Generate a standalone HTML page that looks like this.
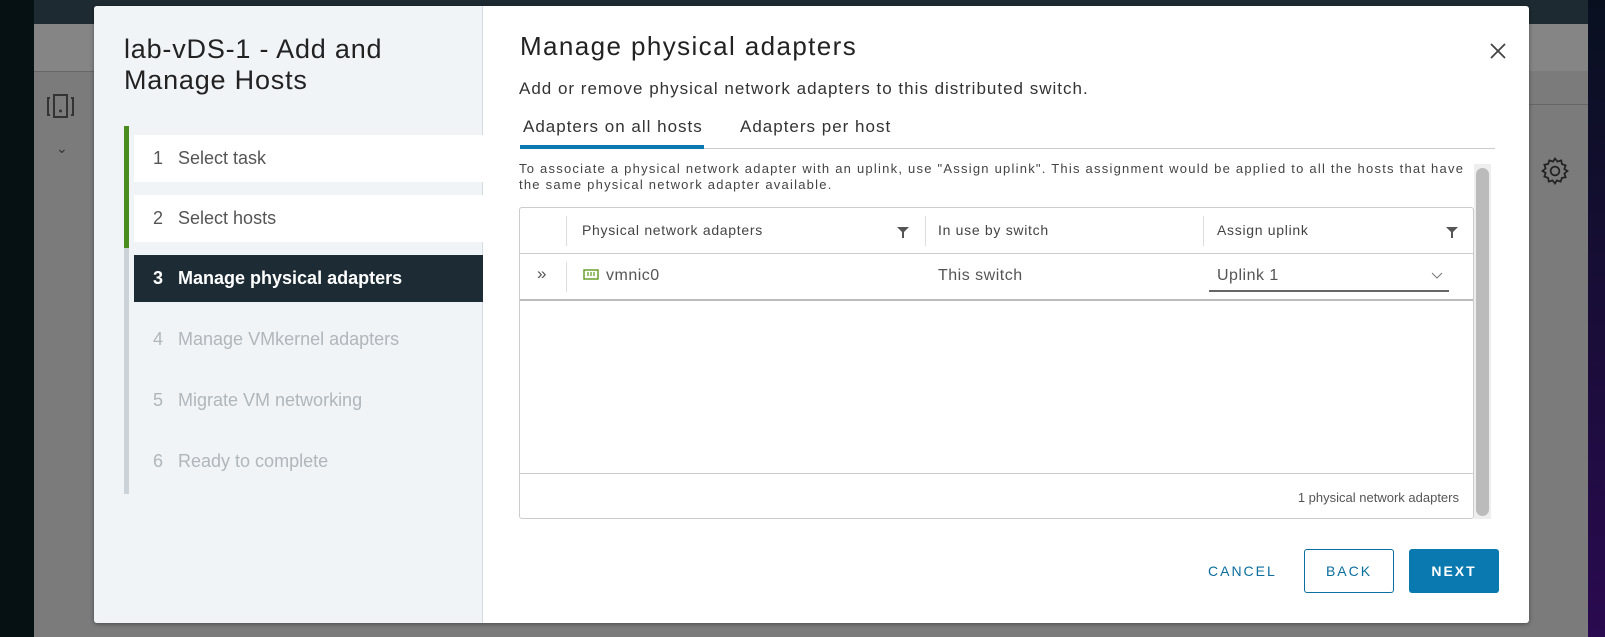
<!DOCTYPE html>
<html><head><style>
*{margin:0;padding:0;box-sizing:border-box}
body{width:1605px;height:637px;overflow:hidden;position:relative;background:#7b7b7b;font-family:"Liberation Sans",sans-serif}
.a{position:absolute}
.t{position:absolute;white-space:nowrap}
</style></head><body>
<div class="a" style="left:0;top:0;width:34px;height:637px;background:#061113"></div>
<div class="a" style="left:34px;top:0;width:1554px;height:24px;background:#1e2a31"></div>
<div class="a" style="left:34px;top:24px;width:1554px;height:47px;background:#858585"></div>
<div class="a" style="left:34px;top:71px;width:60px;height:1px;background:#666"></div>
<div class="a" style="left:1529px;top:104px;width:59px;height:1px;background:#666"></div>
<div class="a" style="left:1588px;top:0;width:17px;height:637px;background:linear-gradient(#081020,#2a0a50)"></div>
<svg class="a" style="left:46px;top:93px" width="30" height="26"><rect x="8" y="2" width="13" height="22" fill="none" stroke="#333" stroke-width="2"/><path d="M4 5H2v17h2M25 5h2v17h-2" fill="none" stroke="#333" stroke-width="2"/><circle cx="14.5" cy="18" r="1.5" fill="#333"/></svg>
<div class="t" style="left:56px;top:140px;color:#333;font-size:14px">⌄</div>
<svg class="a" style="left:1540px;top:156px" width="30" height="30" viewBox="0 0 24 24"><path d="M12 2l2 2.5 3-1 .5 3 3 1-1 3L22 12l-2.5 2 1 3-3 .5-1 3-3-1L12 22l-2-2.5-3 1-.5-3-3-1 1-3L2 12l2.5-2-1-3 3-.5 1-3 3 1z" fill="none" stroke="#222" stroke-width="1.4"/><circle cx="12" cy="12" r="3.5" fill="none" stroke="#222" stroke-width="1.4"/></svg>

<div class="a" style="left:94px;top:6px;width:1435px;height:617px;background:#fff;border-radius:3px;box-shadow:0 1px 4px rgba(0,0,0,.4);overflow:hidden">
 <div class="a" style="left:0;top:0;width:389px;height:617px;background:#f0f4f7;border-right:1px solid #d6dde2"></div>
 <div class="t" style="left:30px;top:28px;font-size:27px;line-height:31px;color:#222;letter-spacing:0.8px">lab-vDS-1 - Add and<br>Manage Hosts</div>
 <div class="a" style="left:30px;top:120px;width:5px;height:368px;background:#ccd3d8"></div>
 <div class="a" style="left:30px;top:120px;width:5px;height:122px;background:#4b8c1f"></div>
 <div class="a" style="left:40px;top:129px;width:349px;height:47px;background:#fff"></div>
 <div class="a" style="left:40px;top:189px;width:349px;height:47px;background:#fff"></div>
 <div class="a" style="left:40px;top:249px;width:349px;height:47px;background:#1c2b34"></div>
 <div class="t" style="left:59px;top:142px;font-size:18px;color:#555">1&nbsp;&nbsp;&nbsp;Select task</div>
 <div class="t" style="left:59px;top:202px;font-size:18px;color:#555">2&nbsp;&nbsp;&nbsp;Select hosts</div>
 <div class="t" style="left:59px;top:262px;font-size:18px;color:#fff;font-weight:bold">3&nbsp;&nbsp;&nbsp;Manage physical adapters</div>
 <div class="t" style="left:59px;top:323px;font-size:18px;color:#b0b6ba">4&nbsp;&nbsp;&nbsp;Manage VMkernel adapters</div>
 <div class="t" style="left:59px;top:384px;font-size:18px;color:#b0b6ba">5&nbsp;&nbsp;&nbsp;Migrate VM networking</div>
 <div class="t" style="left:59px;top:445px;font-size:18px;color:#b0b6ba">6&nbsp;&nbsp;&nbsp;Ready to complete</div>

 <div class="t" style="left:426px;top:25px;font-size:26px;color:#222;letter-spacing:1.4px">Manage physical adapters</div>
 <svg class="a" style="left:1395px;top:36px" width="18" height="18"><path d="M2 2L16 16M16 2L2 16" stroke="#444" stroke-width="1.8"/></svg>
 <div class="t" style="left:425px;top:73px;font-size:17px;color:#333;letter-spacing:1px">Add or remove physical network adapters to this distributed switch.</div>
 <div class="t" style="left:429px;top:111px;font-size:17px;color:#333;letter-spacing:1px">Adapters on all hosts</div>
 <div class="t" style="left:646px;top:111px;font-size:17px;color:#333;letter-spacing:1px">Adapters per host</div>
 <div class="a" style="left:426px;top:142px;width:975px;height:1px;background:#ccc"></div>
 <div class="a" style="left:426px;top:139px;width:184px;height:4px;background:#0a79b0"></div>
 <div class="t" style="left:425px;top:155px;font-size:13px;line-height:16px;color:#444;letter-spacing:1.23px">To associate a physical network adapter with an uplink, use "Assign uplink". This assignment would be applied to all the hosts that have<br>the same physical network adapter available.</div>
 <div class="a" style="left:1380px;top:158px;width:17px;height:355px;background:#eee"></div>
 <div class="a" style="left:1382px;top:162px;width:13px;height:348px;background:#bbb;border-radius:7px"></div>

 <div class="a" style="left:425px;top:201px;width:955px;height:312px;border:1px solid #ccc;border-radius:3px">
  <div class="a" style="left:0;top:45px;width:953px;height:1px;background:#ccc"></div>
  <div class="a" style="left:0;top:91px;width:953px;height:2px;background:#bbb"></div>
  <div class="a" style="left:0;top:265px;width:953px;height:1px;background:#ccc"></div>
  <div class="a" style="left:46px;top:8px;width:1px;height:30px;background:#ddd"></div>
  <div class="a" style="left:46px;top:54px;width:1px;height:30px;background:#ddd"></div>
  <div class="a" style="left:405px;top:8px;width:1px;height:30px;background:#ddd"></div>
  <div class="a" style="left:683px;top:8px;width:1px;height:30px;background:#ddd"></div>
  <div class="t" style="left:62px;top:14px;font-size:14px;color:#444;letter-spacing:0.7px">Physical network adapters</div>
  <div class="t" style="left:418px;top:14px;font-size:14px;color:#444;letter-spacing:0.7px">In use by switch</div>
  <div class="t" style="left:697px;top:14px;font-size:14px;color:#444;letter-spacing:0.7px">Assign uplink</div>
  <svg class="a" style="left:377px;top:19px" width="12" height="11"><path d="M0 0H12L7 5V11H5V5Z" fill="#555"/></svg>
  <svg class="a" style="left:926px;top:19px" width="12" height="11"><path d="M0 0H12L7 5V11H5V5Z" fill="#555"/></svg>
  <div class="t" style="left:17px;top:56px;font-size:17px;color:#555">»</div>
  <svg class="a" style="left:63px;top:61px" width="16" height="12"><rect x="1" y="1" width="14" height="9" fill="none" stroke="#6a9f2a" stroke-width="1.5"/><path d="M5 3v4M8 3v4M11 3v4" stroke="#6a9f2a" stroke-width="1.3"/></svg>
  <div class="t" style="left:86px;top:59px;font-size:16px;color:#555;letter-spacing:0.5px">vmnic0</div>
  <div class="t" style="left:418px;top:59px;font-size:16px;color:#555;letter-spacing:0.5px">This switch</div>
  <div class="t" style="left:697px;top:59px;font-size:16px;color:#555;letter-spacing:0.5px">Uplink 1</div>
  <svg class="a" style="left:911px;top:64px" width="12" height="7"><path d="M1 1L6 6L11 1" fill="none" stroke="#777" stroke-width="1"/></svg>
  <div class="a" style="left:689px;top:82px;width:240px;height:2px;background:#666"></div>
  <div class="t" style="right:14px;top:282px;font-size:13px;color:#555">1 physical network adapters</div>
 </div>

 <div class="t" style="left:1114px;top:557px;font-size:14px;letter-spacing:2px;color:#0a6e9e">CANCEL</div>
 <div class="a" style="left:1210px;top:543px;width:90px;height:44px;border:1px solid #0a6e9e;border-radius:3px;color:#0a6e9e;font-size:14px;letter-spacing:2px;text-align:center;line-height:42px">BACK</div>
 <div class="a" style="left:1315px;top:543px;width:90px;height:44px;background:#0a79b0;border-radius:3px;color:#fff;font-size:14px;font-weight:bold;letter-spacing:2px;text-align:center;line-height:44px">NEXT</div>
</div>
</body></html>
